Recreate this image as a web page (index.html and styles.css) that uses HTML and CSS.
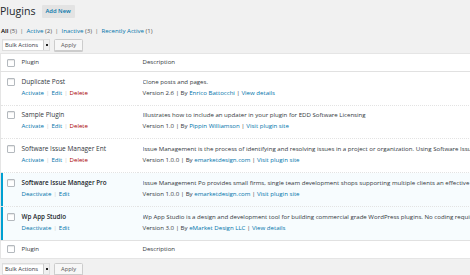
FILE: index.html
```html
<!DOCTYPE html>
<html>
<head>
<meta charset="utf-8">
<link rel="stylesheet" href="styles.css">
</head>
<body>
<div class="wrap">
  <div class="title-row">
    <h1 class="title">Plugins</h1>
    <a class="add-new">Add New</a>
  </div>
  <ul class="subsubsub">
    <li><a class="current">All <span class="count">(5)</span></a><span class="sep">|</span></li>
    <li><a>Active <span class="count">(2)</span></a><span class="sep">|</span></li>
    <li><a>Inactive <span class="count">(3)</span></a><span class="sep">|</span></li>
    <li><a>Recently Active <span class="count">(1)</span></a></li>
  </ul>
  <div class="tablenav">
    <div class="select"><span>Bulk Actions</span><span class="arrow"></span></div>
    <button class="btn">Apply</button>
  </div>
  <table class="plugins">
    <colgroup><col class="c-cb"><col class="c-name"><col class="c-desc"></colgroup>
    <thead>
      <tr><th class="cb"><span class="check"></span></th><th>Plugin</th><th>Description</th></tr>
    </thead>
    <tbody>
      <tr class="inactive">
        <td class="cb"><span class="check"></span></td>
        <td class="name"><strong>Duplicate Post</strong><div class="actions"><a>Activate</a><span class="sep">|</span><a>Edit</a><span class="sep">|</span><a class="delete">Delete</a></div></td>
        <td class="desc"><p>Clone posts and pages.</p><div class="meta">Version 2.6 | By <a>Enrico Battocchi</a> | <a>View details</a></div></td>
      </tr>
      <tr class="inactive">
        <td class="cb"><span class="check"></span></td>
        <td class="name"><strong>Sample Plugin</strong><div class="actions"><a>Activate</a><span class="sep">|</span><a>Edit</a><span class="sep">|</span><a class="delete">Delete</a></div></td>
        <td class="desc"><p>Illustrates how to include an updater in your plugin for EDD Software Licensing</p><div class="meta">Version 1.0 | By <a>Pippin Williamson</a> | <a>Visit plugin site</a></div></td>
      </tr>
      <tr class="inactive">
        <td class="cb"><span class="check"></span></td>
        <td class="name"><strong>Software Issue Manager Ent</strong><div class="actions"><a>Activate</a><span class="sep">|</span><a>Edit</a><span class="sep">|</span><a class="delete">Delete</a></div></td>
        <td class="desc"><p>Issue Management is the process of identifying and resolving issues in a project or organization. Using Software Issue Manager you can track issues effectively.</p><div class="meta">Version 1.0.0 | By <a>emarketdesign.com</a> | <a>Visit plugin site</a></div></td>
      </tr>
      <tr class="active">
        <td class="cb"><span class="check"></span></td>
        <td class="name"><strong>Software Issue Manager Pro</strong><div class="actions"><a>Deactivate</a><span class="sep">|</span><a>Edit</a></div></td>
        <td class="desc"><p>Issue Management Po provides small firms, single team development shops supporting multiple clients an effective way to manage issues.</p><div class="meta">Version 1.0.0 | By <a>emarketdesign.com</a> | <a>Visit plugin site</a></div></td>
      </tr>
      <tr class="active">
        <td class="cb"><span class="check"></span></td>
        <td class="name"><strong>Wp App Studio</strong><div class="actions"><a>Deactivate</a><span class="sep">|</span><a>Edit</a></div></td>
        <td class="desc"><p>Wp App Studio is a design and development tool for building commercial grade WordPress plugins. No coding required.</p><div class="meta">Version 3.0 | By <a>eMarket Design LLC</a> | <a>View details</a></div></td>
      </tr>
    </tbody>
    <tfoot>
      <tr><th class="cb"><span class="check"></span></th><th>Plugin</th><th>Description</th></tr>
    </tfoot>
  </table>
  <div class="tablenav bottom">
    <div class="select"><span>Bulk Actions</span><span class="arrow"></span></div>
    <button class="btn">Apply</button>
  </div>
</div>
</body>
</html>
```
FILE: styles.css
```css
html, body {
  margin: 0;
  padding: 0;
  background: #f1f1f1;
  overflow: hidden;
}
body {
  font-family: "Open Sans", "Liberation Sans", sans-serif;
  font-size: 6.1px;
  color: #444;
  line-height: 1.4;
}
.wrap {
  padding: 3px 0 0 0;
  width: 620px;
}
.title-row {
  display: flex;
  align-items: center;
  gap: 6px;
  height: 17px;
}
.title {
  margin: 0;
  font-weight: 400;
  font-size: 10.6px;
  color: #23282d;
  line-height: 17px;
}
.add-new {
  display: inline-block;
  background: #e3e3e3;
  color: #0073aa;
  font-weight: 600;
  font-size: 5.8px;
  padding: 3px 4px;
  line-height: 7px;
  border-radius: 1px;
}
.subsubsub {
  list-style: none;
  margin: 7px 0 0 0;
  padding: 0 0 0 1px;
  display: flex;
  color: #666;
  height: 8px;
  line-height: 8px;
}
.subsubsub a {
  color: #0073aa;
}
.subsubsub a.current {
  color: #000;
  font-weight: 600;
}
.subsubsub .count {
  color: #555;
  font-weight: 400;
}
.subsubsub .sep {
  padding: 0 3px;
  color: #666;
}
.tablenav {
  display: flex;
  gap: 4px;
  margin: 4px 0 2px 2px;
  height: 12px;
  align-items: center;
}
.tablenav.bottom {
  margin-top: 4px;
}
.select {
  width: 48px;
  height: 12px;
  box-sizing: border-box;
  background: #fff;
  border: 1px solid #ddd;
  box-shadow: inset 0 1px 1px rgba(0,0,0,0.07);
  display: flex;
  align-items: center;
  justify-content: space-between;
  padding-left: 2px;
  color: #32373c;
  font-size: 5.8px;
}
.select .arrow {
  width: 5px;
  height: 10px;
  border-left: 1px solid #ccc;
  background: #f0f0f0;
  position: relative;
}
.select .arrow::after {
  content: "";
  position: absolute;
  left: 1.5px;
  top: 4px;
  width: 2px;
  height: 2px;
  background: #222;
}
.btn {
  height: 12px;
  padding: 0 6px;
  font-family: inherit;
  font-size: 5.8px;
  color: #555;
  background: #f7f7f7;
  border: 1px solid #ccc;
  border-radius: 1.5px;
  box-shadow: 0 1px 0 #ccc;
  line-height: 10px;
}
.plugins {
  width: 620px;
  border-collapse: collapse;
  table-layout: fixed;
  background: #fff;
  border: 1px solid #e5e5e5;
}
.c-cb { width: 16px; }
.c-name { width: 121px; }
.plugins th {
  text-align: left;
  font-weight: 400;
  color: #32373c;
  padding: 0 5px;
  height: 17px;
  vertical-align: middle;
}
.plugins thead th {
  border-bottom: 1px solid #e1e1e1;
}
.plugins tfoot th {
  border-top: 1px solid #e1e1e1;
}
.plugins td {
  vertical-align: top;
  padding: 4.6px 5px 0 5px;
  height: 27.15px;
  border-bottom: 1px dotted #e3e3e3;
}
.plugins tbody tr:last-child td {
  border-bottom: none;
}
.plugins .cb {
  padding: 0 0 0 6px;
  vertical-align: top;
}
.plugins thead .cb, .plugins tfoot .cb {
  vertical-align: middle;
}
.plugins td.cb {
  padding-top: 5.6px;
}
.check {
  display: block;
  width: 6px;
  height: 6px;
  border: 1px solid #b4b9be;
  border-radius: 1px;
  background: #fff;
  box-shadow: inset 0 1px 1px rgba(0,0,0,0.1);
}
.plugins tr.active td {
  background: #f7fcfe;
}
.plugins tr.active td.cb {
  box-shadow: inset 2px 0 0 #00a0d2;
}
.name strong {
  display: block;
  font-weight: 600;
  color: #23282d;
  font-size: 6.3px;
  line-height: 9px;
  white-space: nowrap;
}
.plugins tr.inactive .name strong {
  font-weight: 400;
  font-size: 6.5px;
  color: #32373c;
}
.actions {
  margin-top: 2px;
  line-height: 9px;
  color: #ccc;
  white-space: nowrap;
}
.actions a {
  color: #0073aa;
}
.actions a.delete {
  color: #a00;
}
.actions .sep {
  padding: 0 2px;
  color: #ccc;
}
.desc {
  color: #32373c;
}
.desc p {
  margin: 0;
  line-height: 9px;
  white-space: nowrap;
  overflow: hidden;
}
.desc .meta {
  margin-top: 2px;
  line-height: 9px;
  color: #32373c;
  white-space: nowrap;
}
.desc .meta a {
  color: #0073aa;
}
```
